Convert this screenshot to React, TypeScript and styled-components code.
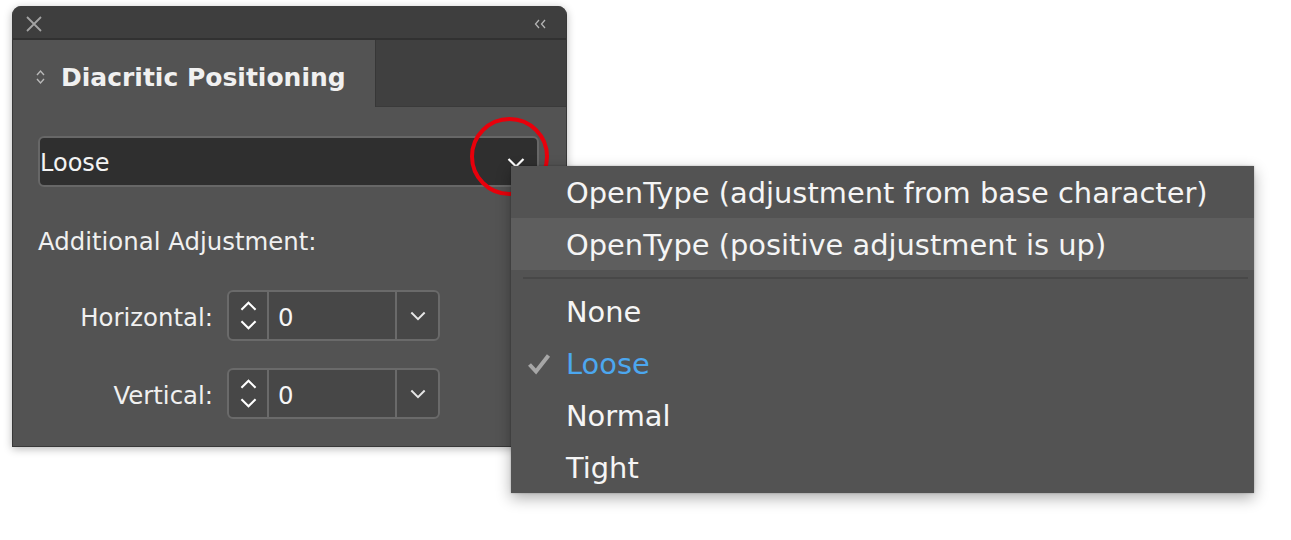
import styled, { createGlobalStyle } from "styled-components";

const GlobalStyle = createGlobalStyle`
  body {
    margin: 0;
    background: #ffffff;
    font-family: "DejaVu Sans", "Open Sans", sans-serif;
  }
  * {
    box-sizing: border-box;
  }
`;

const Stage = styled.div`
  position: relative;
  width: 1291px;
  height: 540px;
  padding: 6px 0 0 12px;
  overflow: hidden;
`;

const Panel = styled.div`
  width: 555px;
  height: 441px;
  background: #535353;
  border: 1px solid #383838;
  border-top: none;
  border-radius: 9px 9px 0 0;
  box-shadow: 0 2px 8px rgba(0, 0, 0, 0.28);
  display: flex;
  flex-direction: column;
  overflow: hidden;
`;

const TitleBar = styled.div`
  height: 34px;
  flex-shrink: 0;
  background: #3e3e3e;
  border-bottom: 2px solid #313131;
  display: flex;
  align-items: center;
  justify-content: space-between;
  padding: 3px 19px 0 12px;
`;

const TabRow = styled.div`
  height: 67px;
  flex-shrink: 0;
  background: #404040;
  border-bottom: 1px solid #3a3a3a;
  display: flex;
`;

const Tab = styled.div`
  width: 363px;
  background: #535353;
  border-right: 1px solid #373737;
  margin-bottom: -1px;
  display: flex;
  align-items: center;
  gap: 16px;
  padding: 7px 0 0 23px;
`;

const TabTitle = styled.span`
  font-family: "DejaVu Sans", sans-serif;
  font-weight: 700;
  font-size: 25px;
  color: #f0f0f0;
  white-space: nowrap;
`;

const Body = styled.div`
  flex: 1;
  padding: 29px 27px 0 25px;
  display: flex;
  flex-direction: column;
`;

const Select = styled.div`
  height: 51px;
  background: #2f2f2f;
  border: 2px solid #676767;
  border-radius: 6px;
  display: flex;
  align-items: center;
  justify-content: space-between;
  padding: 2px 12px 0 0;
  font-size: 24px;
  color: #f3f3f3;
`;

const SectionLabel = styled.div`
  margin-top: 40px;
  font-size: 24.4px;
  line-height: 30px;
  color: #f0f0f0;
`;

const FieldRow = styled.div<{ $top: number }>`
  margin-top: ${(p) => p.$top}px;
  display: flex;
  align-items: center;
  gap: 14px;
`;

const FieldLabel = styled.span`
  width: 175px;
  text-align: right;
  font-size: 24.4px;
  color: #f0f0f0;
  padding-top: 4px;
`;

const Spinner = styled.div`
  width: 213px;
  height: 51px;
  border: 2px solid #6a6a6a;
  border-radius: 6px;
  background: #474747;
  display: flex;
  overflow: hidden;
`;

const StepButtons = styled.div`
  width: 40px;
  border-right: 2px solid #6a6a6a;
  display: flex;
  flex-direction: column;
  align-items: center;
  justify-content: center;
  gap: 9px;
`;

const ValueField = styled.div`
  flex: 1;
  display: flex;
  align-items: center;
  padding: 4px 0 0 9px;
  font-size: 24.4px;
  color: #f5f5f5;
`;

const ArrowButton = styled.div`
  width: 43px;
  border-left: 2px solid #6a6a6a;
  display: flex;
  align-items: center;
  justify-content: center;
`;

const Highlight = styled.div`
  position: absolute;
  left: 470px;
  top: 117px;
  width: 79px;
  height: 79px;
  border: 4.5px solid #e8000b;
  border-radius: 50%;
  z-index: 2;
  pointer-events: none;
`;

const Menu = styled.div`
  position: absolute;
  left: 511px;
  top: 166px;
  width: 743px;
  background: #535353;
  box-shadow: 0 5px 14px rgba(0, 0, 0, 0.32), 0 0 2px rgba(0, 0, 0, 0.25);
  display: flex;
  flex-direction: column;
  z-index: 3;
`;

const MenuItem = styled.div<{ $hover?: boolean; $selected?: boolean }>`
  height: 52px;
  display: grid;
  grid-template-columns: 55px 1fr;
  align-items: center;
  background: ${(p) => (p.$hover ? "#5e5e5e" : "transparent")};
  color: ${(p) => (p.$selected ? "#4ca7ef" : "#f5f5f5")};
  font-size: 28.9px;
  white-space: nowrap;
  padding-top: 2px;
`;

const Gutter = styled.span`
  display: flex;
  justify-content: center;
  align-items: center;
`;

const Separator = styled.div`
  height: 15px;
  display: flex;
  align-items: center;
  padding: 0 6px 0 12px;
  &::after {
    content: "";
    flex: 1;
    height: 2px;
    background: #484848;
  }
`;

const CloseIcon = () => (
  <svg width="18" height="18" viewBox="0 0 18 18">
    <path d="M2 2 L16 16 M16 2 L2 16" stroke="#a3a3a3" strokeWidth="1.8" fill="none" />
  </svg>
);

const CollapseIcon = () => (
  <svg width="14" height="10" viewBox="0 0 14 10">
    <path d="M6 1 L2.5 5 L6 9 M12 1 L8.5 5 L12 9" stroke="#b3b3b3" strokeWidth="1.3" fill="none" />
  </svg>
);

const SortIcon = () => (
  <svg width="9" height="16" viewBox="0 0 9 16">
    <path d="M1 6 L4.5 2 L8 6 M1 10 L4.5 14 L8 10" stroke="#b8b8b8" strokeWidth="1.4" fill="none" />
  </svg>
);

const Chevron = ({ up = false, color = "#ffffff", w = 18 }: { up?: boolean; color?: string; w?: number }) => (
  <svg width={w} height="10" viewBox="0 0 18 10">
    <path
      d={up ? "M1.5 9 L9 1.5 L16.5 9" : "M1.5 1 L9 8.5 L16.5 1"}
      stroke={color}
      strokeWidth="2.2"
      fill="none"
    />
  </svg>
);

const Check = () => (
  <svg width="24" height="22" viewBox="0 0 24 22">
    <path d="M2.5 11.5 L9 18.5 L21.5 2.5" stroke="#a6a6a6" strokeWidth="4" fill="none" />
  </svg>
);

function NumberField({ label, top }: { label: string; top: number }) {
  return (
    <FieldRow $top={top}>
      <FieldLabel>{label}</FieldLabel>
      <Spinner>
        <StepButtons>
          <Chevron up w={17} />
          <Chevron w={17} />
        </StepButtons>
        <ValueField>0</ValueField>
        <ArrowButton>
          <Chevron w={16} color="#e6e6e6" />
        </ArrowButton>
      </Spinner>
    </FieldRow>
  );
}

const options = ["None", "Loose", "Normal", "Tight"];

export default function App() {
  return (
    <Stage>
      <GlobalStyle />
      <Panel>
        <TitleBar>
          <CloseIcon />
          <CollapseIcon />
        </TitleBar>
        <TabRow>
          <Tab>
            <SortIcon />
            <TabTitle>Diacritic Positioning</TabTitle>
          </Tab>
        </TabRow>
        <Body>
          <Select>
            <span>Loose</span>
            <Chevron />
          </Select>
          <SectionLabel>Additional Adjustment:</SectionLabel>
          <NumberField label="Horizontal:" top={33} />
          <NumberField label="Vertical:" top={27} />
        </Body>
      </Panel>
      <Highlight />
      <Menu>
        <MenuItem>
          <Gutter />
          <span>OpenType (adjustment from base character)</span>
        </MenuItem>
        <MenuItem $hover>
          <Gutter />
          <span>OpenType (positive adjustment is up)</span>
        </MenuItem>
        <Separator />
        {options.map((o) => (
          <MenuItem key={o} $selected={o === "Loose"}>
            <Gutter>{o === "Loose" && <Check />}</Gutter>
            <span>{o}</span>
          </MenuItem>
        ))}
      </Menu>
    </Stage>
  );
}
